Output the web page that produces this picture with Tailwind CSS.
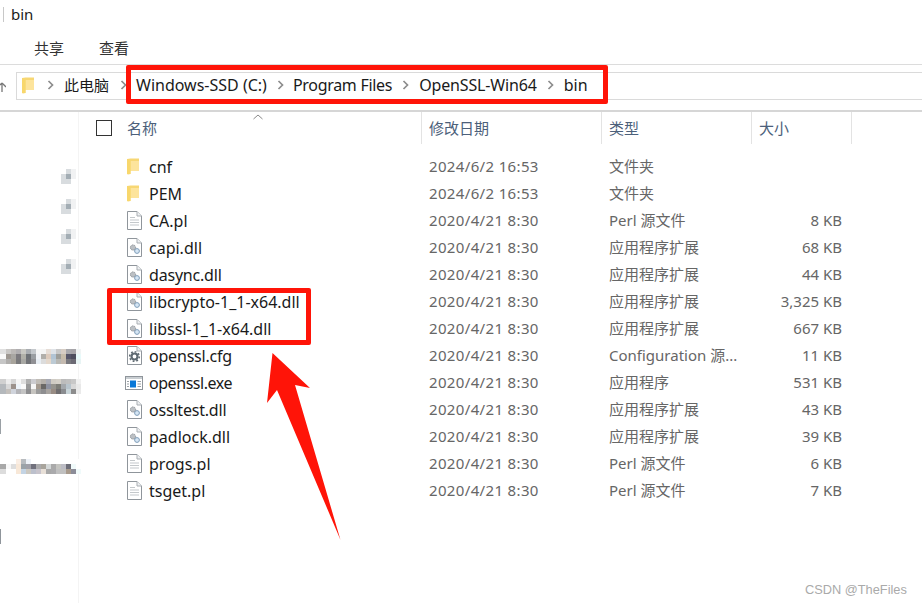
<!DOCTYPE html>
<html lang="zh-CN">
<head>
  <meta charset="UTF-8" />
  <title>bin</title>
  <script src="https://cdn.jsdelivr.net/npm/@tailwindcss/browser@4"></script>
</head>
<body class="bg-white overflow-hidden font-['Noto_Sans','Noto_Sans_CJK_SC',sans-serif] text-[16px] text-[#1a1a1a]">
  <!-- icon symbols -->
  <svg width="0" height="0" class="absolute">
    <defs>
      <symbol id="folder" viewBox="0 0 12 17">
        <path d="M0 1 L3.5 0.5 L12 0.5 L12 13 L3.5 13 L3.5 16 L1 16.5 L0 16 Z" fill="#f7d774"/>
        <path d="M3.5 3 L12 3 L12 13 L3.5 13 Z" fill="#fde49c"/>
        <path d="M0 1 L3.5 3 L3.5 16 L0 16 Z" fill="#f8d76c"/>
      </symbol>
      <symbol id="doc" viewBox="0 0 15 19">
        <path d="M.5 .5 H10 L14.5 5 V18.5 H.5 Z" fill="#fff" stroke="#8f959b"/>
        <path d="M10 .5 V5 H14.5" fill="#eef0f2" stroke="#a9aeb3"/>
        <path d="M3 6.5 H8 M3 9 H12 M3 11.5 H12 M3 14 H12" stroke="#c4c8cb" stroke-width="1.2"/>
      </symbol>
      <symbol id="dll" viewBox="0 0 15 19">
        <path d="M.5 .5 H10 L14.5 5 V18.5 H.5 Z" fill="#fff" stroke="#8f959b"/>
        <path d="M10 .5 V5 H14.5" fill="#eef0f2" stroke="#a9aeb3"/>
        <circle cx="6" cy="9.5" r="2.6" fill="#bcc0c4" stroke="#8a8f94" stroke-dasharray="1.4 .8"/>
        <circle cx="10" cy="13" r="2.4" fill="#d6e6f4" stroke="#7e9cb8"/>
      </symbol>
      <symbol id="cfg" viewBox="0 0 15 19">
        <path d="M.5 .5 H10 L14.5 5 V18.5 H.5 Z" fill="#fff" stroke="#8f959b"/>
        <path d="M10 .5 V5 H14.5" fill="#eef0f2" stroke="#a9aeb3"/>
        <circle cx="7.5" cy="10.5" r="3" fill="none" stroke="#5f6a72" stroke-width="2.2"/>
        <circle cx="7.5" cy="10.5" r="4.8" fill="none" stroke="#5f6a72" stroke-width="1.6" stroke-dasharray="1.8 1.9"/>
      </symbol>
      <symbol id="exe" viewBox="0 0 18 14">
        <rect x=".5" y=".5" width="17" height="13" fill="#fff" stroke="#8f959b"/>
        <rect x="1" y="1" width="16" height="2" fill="#c9ced2"/>
        <rect x="5" y="4.5" width="6" height="7" fill="#0a78d7"/>
        <path d="M12.5 5.5 H16 M12.5 8 H16 M12.5 10.5 H16 M2 5.5 H4 M2 8 H4 M2 10.5 H4" stroke="#9aa0a5"/>
      </symbol>
      <symbol id="chev" viewBox="0 0 7 10">
        <path d="M1.5 1 L5.5 5 L1.5 9" fill="none" stroke="#8c8c8c" stroke-width="1.7"/>
      </symbol>
    </defs>
  </svg>

  <div class="relative w-[922px] h-[603px] overflow-hidden">
    <!-- title bar -->
    <div class="h-[28px] flex items-center pl-[3px]">
      <span class="w-px h-[15px] bg-[#c8c8c8]"></span>
      <span class="ml-[7px] text-[15px]">bin</span>
    </div>

    <!-- ribbon tabs -->
    <div class="h-[37px] flex items-center pl-[34px] gap-[35px] text-[15px] text-[#333] border-b border-[#dcdcdc] pt-[4px]">
      <span>共享</span>
      <span>查看</span>
    </div>

    <!-- address bar -->
    <div class="h-[47px] flex items-start pt-[7px] border-b-2 border-[#d6d6d6] relative">
      <svg class="absolute left-0 top-[14px]" width="6" height="14" viewBox="0 0 6 14"><path d="M0 6 L2 4 M2 4 V13" stroke="#777" stroke-width="1.3" fill="none"/><path d="M2 4 L6 8" stroke="#777" stroke-width="1.3"/></svg>
      <div class="ml-[16px] flex-1 h-[28px] border-y border-l border-[#dadada] flex items-center whitespace-nowrap pb-[2px]">
        <svg class="ml-[5px] w-[12px] h-[17px]"><use href="#folder"/></svg>
        <svg class="ml-[13px] w-[7px] h-[10px]"><use href="#chev"/></svg>
        <span class="ml-[10px] text-[15px]">此电脑</span>
        <svg class="ml-[11px] w-[7px] h-[10px]"><use href="#chev"/></svg>
        <span class="ml-[9px]">Windows-SSD (C:)</span>
        <svg class="ml-[10px] w-[7px] h-[10px]"><use href="#chev"/></svg>
        <span class="ml-[9px] tracking-[-0.3px]">Program Files</span>
        <svg class="ml-[10px] w-[7px] h-[10px]"><use href="#chev"/></svg>
        <span class="ml-[10px] tracking-[-0.15px]">OpenSSL-Win64</span>
        <svg class="ml-[10px] w-[7px] h-[10px]"><use href="#chev"/></svg>
        <span class="ml-[10px]">bin</span>
      </div>
    </div>

    <div class="flex h-[491px]">
      <!-- blurred navigation pane -->
      <div class="w-[79px] shrink-0 relative border-r border-[#f4f4f4]">
        <svg id="blur" class="absolute left-0 top-0" width="82" height="491" shape-rendering="crispEdges">
          <g fill="#d8dcdf">
            <path d="M66 57h5v5h-5zM61 62h5v5h-5zM61 67h10v5H61z"/>
            <path d="M66 87h5v5h-5zM61 92h5v5h-5zM61 97h10v5H61z"/>
            <path d="M66 117h5v5h-5zM61 122h5v5h-5zM61 127h10v5H61z"/>
            <path d="M66 147h5v5h-5zM61 152h5v5h-5zM61 157h10v5H61z"/>
          </g>
          <path d="M66 62h5v5h-5z M66 92h5v5h-5z M66 122h5v5h-5z M66 152h5v5h-5z" fill="#a3adb4"/>
          <path d="M71 57h5v5h-5z M71 62h5v5h-5z M71 87h5v5h-5z M71 92h5v5h-5z M71 117h5v5h-5z M71 122h5v5h-5z M71 147h5v5h-5z M71 152h5v5h-5z" fill="#f1f2f3"/>
          <rect x="0" y="307" width="1" height="15" fill="#9aa0a5"/>
          <rect x="0" y="417" width="1" height="15" fill="#8f959b"/>
        </svg>
      </div>

      <!-- file list -->
      <div class="flex-1">
        <!-- column headers -->
        <div class="h-[34px] flex items-center relative text-[15px] text-[#4c607a] pb-[2px]">
          <span class="ml-[17px] w-[16px] h-[16px] border border-[#333]"></span>
          <span class="ml-[15px] w-[294px]">名称</span>
          <svg class="absolute left-[174px] top-[2px]" width="10" height="6" viewBox="0 0 10 6"><path d="M.5 5 L5 1 L9.5 5" fill="none" stroke="#8a8a8a"/></svg>
          <span class="w-[180px] h-full flex items-center border-l border-[#e3e3e3] pl-[7px]">修改日期</span>
          <span class="w-[150px] h-full flex items-center border-l border-[#e3e3e3] pl-[7px]">类型</span>
          <span class="w-[100px] h-full flex items-center border-l border-[#e3e3e3] pl-[7px]">大小</span>
          <span class="h-full border-l border-[#e3e3e3]"></span>
        </div>

        <div class="pt-[7px] text-[15px]">
          <div class="h-[27px] flex items-center"><svg class="ml-[48px] w-[12px] h-[17px]"><use href="#folder"/></svg><span class="ml-[10px] w-[280px] text-[16px]">cnf</span><span class="w-[180px] text-[#666] tracking-[0.35px]">2024/6/2 16:53</span><span class="w-[150px] text-[#666]">文件夹</span></div>
          <div class="h-[27px] flex items-center"><svg class="ml-[48px] w-[12px] h-[17px]"><use href="#folder"/></svg><span class="ml-[10px] w-[280px] text-[16px]">PEM</span><span class="w-[180px] text-[#666] tracking-[0.35px]">2024/6/2 16:53</span><span class="w-[150px] text-[#666]">文件夹</span></div>
          <div class="h-[27px] flex items-center"><svg class="ml-[48px] w-[15px] h-[19px]"><use href="#doc"/></svg><span class="ml-[7px] w-[280px] text-[16px]">CA.pl</span><span class="w-[180px] text-[#666] tracking-[0.35px]">2020/4/21 8:30</span><span class="w-[150px] text-[#666]">Perl 源文件</span><span class="w-[83px] text-right text-[#666]">8 KB</span></div>
          <div class="h-[27px] flex items-center"><svg class="ml-[48px] w-[15px] h-[19px]"><use href="#dll"/></svg><span class="ml-[7px] w-[280px] text-[16px]">capi.dll</span><span class="w-[180px] text-[#666] tracking-[0.35px]">2020/4/21 8:30</span><span class="w-[150px] text-[#666]">应用程序扩展</span><span class="w-[83px] text-right text-[#666]">68 KB</span></div>
          <div class="h-[27px] flex items-center"><svg class="ml-[48px] w-[15px] h-[19px]"><use href="#dll"/></svg><span class="ml-[7px] w-[280px] text-[16px] tracking-[-0.2px]">dasync.dll</span><span class="w-[180px] text-[#666] tracking-[0.35px]">2020/4/21 8:30</span><span class="w-[150px] text-[#666]">应用程序扩展</span><span class="w-[83px] text-right text-[#666]">44 KB</span></div>
          <div class="h-[27px] flex items-center"><svg class="ml-[48px] w-[15px] h-[19px]"><use href="#dll"/></svg><span class="ml-[7px] w-[280px] text-[16px]">libcrypto-1_1-x64.dll</span><span class="w-[180px] text-[#666] tracking-[0.35px]">2020/4/21 8:30</span><span class="w-[150px] text-[#666]">应用程序扩展</span><span class="w-[83px] text-right text-[#666]">3,325 KB</span></div>
          <div class="h-[27px] flex items-center"><svg class="ml-[48px] w-[15px] h-[19px]"><use href="#dll"/></svg><span class="ml-[7px] w-[280px] text-[16px]">libssl-1_1-x64.dll</span><span class="w-[180px] text-[#666] tracking-[0.35px]">2020/4/21 8:30</span><span class="w-[150px] text-[#666]">应用程序扩展</span><span class="w-[83px] text-right text-[#666]">667 KB</span></div>
          <div class="h-[27px] flex items-center"><svg class="ml-[48px] w-[15px] h-[19px]"><use href="#cfg"/></svg><span class="ml-[7px] w-[280px] text-[16px] tracking-[-0.2px]">openssl.cfg</span><span class="w-[180px] text-[#666] tracking-[0.35px]">2020/4/21 8:30</span><span class="w-[150px] text-[#666] whitespace-nowrap overflow-hidden">Configuration 源...</span><span class="w-[83px] text-right text-[#666]">11 KB</span></div>
          <div class="h-[27px] flex items-center"><svg class="ml-[46px] w-[18px] h-[14px]"><use href="#exe"/></svg><span class="ml-[6px] w-[280px] text-[16px] tracking-[-0.45px]">openssl.exe</span><span class="w-[180px] text-[#666] tracking-[0.35px]">2020/4/21 8:30</span><span class="w-[150px] text-[#666]">应用程序</span><span class="w-[83px] text-right text-[#666]">531 KB</span></div>
          <div class="h-[27px] flex items-center"><svg class="ml-[48px] w-[15px] h-[19px]"><use href="#dll"/></svg><span class="ml-[7px] w-[280px] text-[16px] tracking-[-0.2px]">ossltest.dll</span><span class="w-[180px] text-[#666] tracking-[0.35px]">2020/4/21 8:30</span><span class="w-[150px] text-[#666]">应用程序扩展</span><span class="w-[83px] text-right text-[#666]">43 KB</span></div>
          <div class="h-[27px] flex items-center"><svg class="ml-[48px] w-[15px] h-[19px]"><use href="#dll"/></svg><span class="ml-[7px] w-[280px] text-[16px]">padlock.dll</span><span class="w-[180px] text-[#666] tracking-[0.35px]">2020/4/21 8:30</span><span class="w-[150px] text-[#666]">应用程序扩展</span><span class="w-[83px] text-right text-[#666]">39 KB</span></div>
          <div class="h-[27px] flex items-center"><svg class="ml-[48px] w-[15px] h-[19px]"><use href="#doc"/></svg><span class="ml-[7px] w-[280px] text-[16px]">progs.pl</span><span class="w-[180px] text-[#666] tracking-[0.35px]">2020/4/21 8:30</span><span class="w-[150px] text-[#666]">Perl 源文件</span><span class="w-[83px] text-right text-[#666]">6 KB</span></div>
          <div class="h-[27px] flex items-center"><svg class="ml-[48px] w-[15px] h-[19px]"><use href="#doc"/></svg><span class="ml-[7px] w-[280px] text-[16px]">tsget.pl</span><span class="w-[180px] text-[#666] tracking-[0.35px]">2020/4/21 8:30</span><span class="w-[150px] text-[#666]">Perl 源文件</span><span class="w-[83px] text-right text-[#666]">7 KB</span></div>
        </div>
      </div>
    </div>

    <!-- red annotations -->
    <div class="absolute left-[126px] top-[65px] w-[482px] h-[39px] border-[5px] border-[#ff1408] rounded-[2px]"></div>
    <div class="absolute left-[107px] top-[288px] w-[204px] h-[57px] border-[5px] border-[#ff1408] rounded-[2px]"></div>
    <svg class="absolute left-0 top-0 pointer-events-none" width="922" height="603">
      <path d="M272.5 353 L310 388 L295 385 L340.5 540 L277 390 L267 403 Z" fill="#ff1408"/>
    </svg>

    <!-- watermark -->
    <span class="absolute left-[805px] top-[580px] font-['Liberation_Sans',sans-serif] text-[12.8px] text-[#aaa]">CSDN @TheFiles</span>
  </div>

  <script>
    // mosaic-blurred sidebar rows, one colour per 5px block
    const blurRows = [
      [237, 'e0e0e0 c9c7c5 bbb8b6 b0aeb0 c8c8c2 a9adb1 c4c8cc f6f6f6 f4f4f4 e6ddd6 dfe3e8 c8c8c8 d6cdc4 a8a8ac a6a4a8 f0f4f4'],
      [242, 'fafafa 9e9892 a8a6a2 7c7a7e b0b0a8 6e7276 9a9ea2 f0f2f6 b0aeaa dccabc b2c4d4 9e9e9a c6bcaa 56566a 4e4e5e e8fafa'],
      [247, 'c6c6c6 b0aeac a8a49c 7a7a7c a8a8a4 727478 909094 e8eef4 dcdcdc e4d8cc bccad4 b8b8b4 c4bab0 78787e 6c6a74 e8f4f4'],
      [267, 'd0d0d0 ececec d6d6d6 f6f6f6 dedede b0b0b0 ccccd0 c0bcb6 b4b0aa a8aab4 d0ccc4 d4d0c8 bcbcbc c0c0c0 c8c8c8 f0f0f0'],
      [272, 'b4b8bc d8d8d8 9c928c eef4fa fafafa 989898 f6f6f6 a49a90 6a6866 8e92a0 96948e 7e7e78 a4a8ac b8c4cc d8d8d8 e8e8e8'],
      [277, 'b4b8bc c4c0bc d0d4dc b4b4b8 c4c4c4 8e8e90 c6c4c0 9c9c9c 8e8e90 a8a4a0 988c84 706e70 8a8c90 c8d4d8 8c8c8c eaeaea'],
      [347, 'ffffff ffffff ffffff faeee4 b8bcc0 eef2f8 ffffff ffffff ffffff ffffff ffffff ffffff ffffff ffffff ffffff ffffff'],
      [352, 'a8a8a8 f8f8f8 dedede f8e8d8 9aa2a8 a0a0a8 70707c aaaaac a8a49c d4d8d8 aaaaaa c4c4c0 bcbcc4 6e6e78 f0fafa ffffff'],
      [357, 'dcdcdc ffffff ffffff f8e8d8 c4d4e4 ccc8c0 bcc0cc c8c4cc e8e0d8 a8a8a8 aaaaac c0c0c0 c0c0c0 a89a8c 8c8c98 f0fafa']
    ];
    const blur = document.getElementById('blur');
    blurRows.forEach(([y, colours]) => {
      colours.split(' ').forEach((c, i) => {
        const r = document.createElementNS('http://www.w3.org/2000/svg', 'rect');
        r.setAttribute('x', i === 0 ? 0 : 1 + 5 * i);
        r.setAttribute('y', y);
        r.setAttribute('width', i === 0 ? 6 : 5);
        r.setAttribute('height', 5);
        r.setAttribute('fill', '#' + c);
        blur.appendChild(r);
      });
    });
  </script>
</body>
</html>
